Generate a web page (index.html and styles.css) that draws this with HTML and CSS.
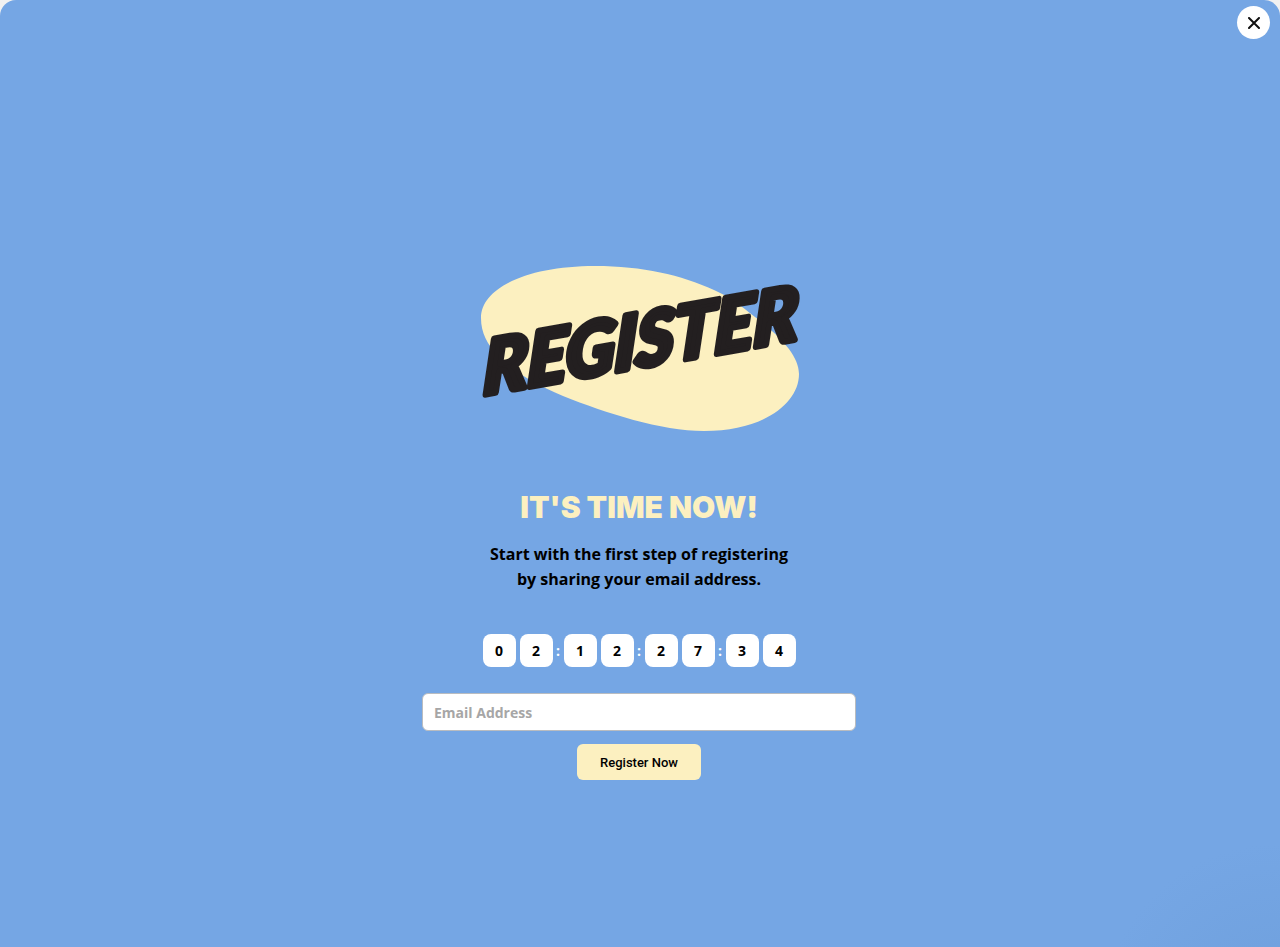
FILE: index.html
```html
<!DOCTYPE html>
<html lang="en">
<head>
<meta charset="utf-8">
<meta name="viewport" content="width=device-width, initial-scale=1">
<title>Register</title>
<link rel="stylesheet" href="styles.css">
</head>
<body>
<main class="modal">
  <button class="close" type="button" aria-label="Close">
    <svg viewBox="0 0 12 12" width="12" height="12" aria-hidden="true"><path d="M1 1L11 11M11 1L1 11"/></svg>
  </button>
  <section class="content">
    <svg class="logo" viewBox="0 0 320 168" role="img" aria-label="Register">
      <path class="blob" d="M2 53C2 22 50 1 116 1C164 1 202 10 235 25C249 31 261 40 276 52C302 72 320 91 320 109C320 138 285 166 225 166C182 166 127 148 84 131C55 119 34 106 20 92C8 79 2 68 2 53Z"/>
      <text class="wordmark" transform="translate(4 130) rotate(-10) skewX(-12)">REGISTER</text>
    </svg>
    <h1 class="title">IT'S TIME NOW!</h1>
    <p class="lead">Start with the first step of registering<br>by sharing your email address.</p>
    <div class="countdown" role="timer">
      <span class="digit">0</span><span class="digit">2</span><span class="colon">:</span>
      <span class="digit">1</span><span class="digit">2</span><span class="colon">:</span>
      <span class="digit">2</span><span class="digit">7</span><span class="colon">:</span>
      <span class="digit">3</span><span class="digit">4</span>
    </div>
    <form class="form">
      <input class="email" type="email" placeholder="Email Address" aria-label="Email Address">
      <button class="submit" type="submit">Register Now</button>
    </form>
  </section>
</main>
</body>
</html>
```
FILE: styles.css
```css
* { box-sizing: border-box; }
body { margin: 0; background: #f1f1f1; color: #000; font-family: "Open Sans", sans-serif; }
.modal {
  position: relative;
  min-height: 100vh;
  display: flex;
  justify-content: center;
  align-items: center;
  padding: 98px 17px 0 15px;
  border-radius: 16px 16px 0 0;
  background: radial-gradient(circle at 100% 108%, #6e9fdc 0, #75a6e4 180px);
}
.close {
  position: absolute;
  top: 6px;
  right: 10px;
  width: 33px;
  height: 33px;
  display: grid;
  place-items: center;
  padding: 0;
  border: 0;
  border-radius: 50%;
  background: #fff;
}
.close path { fill: none; stroke: #111; stroke-width: 2; stroke-linecap: round; }
.content {
  width: 100%;
  max-width: 434px;
  display: flex;
  flex-direction: column;
  align-items: center;
}
.logo { width: 320px; max-width: 100%; overflow: visible; }
.blob { fill: #fcf0c0; }
.wordmark {
  font: italic 900 74px Lato, sans-serif;
  fill: #231f20;
  stroke: #231f20;
  stroke-width: 6px;
  stroke-linejoin: round;
}
.title {
  margin: 54px 0 0;
  color: #fcf0c0;
  font: 900 30px/40px Inter, sans-serif;
}
.lead { margin: 15px 0 0; font-size: 16px; font-weight: 700; line-height: 25px; text-align: center; }
.countdown { display: flex; gap: 4px; margin-top: 42px; }
.digit {
  width: 33px;
  height: 33px;
  display: grid;
  place-items: center;
  border-radius: 8px;
  background: #fff;
  font-size: 14px;
  font-weight: 700;
}
.colon { width: 3px; display: flex; justify-content: center; color: #fff; font-size: 14px; font-weight: 700; line-height: 33px; }
.form { width: 100%; display: flex; flex-direction: column; align-items: center; gap: 13px; margin-top: 26px; }
.email {
  width: 100%;
  height: 38px;
  padding: 0 11px;
  border: 1px solid #b9bcc0;
  border-radius: 6px;
  background: #fff;
  font: 700 14px "Open Sans", sans-serif;
}
.email::placeholder { color: #a6a6a6; opacity: 1; }
.submit {
  height: 36px;
  padding: 0 23px;
  border: 0;
  border-radius: 6px;
  background: #fcf0c0;
  color: #000;
  font: 500 13px Roboto, sans-serif;
}
```
